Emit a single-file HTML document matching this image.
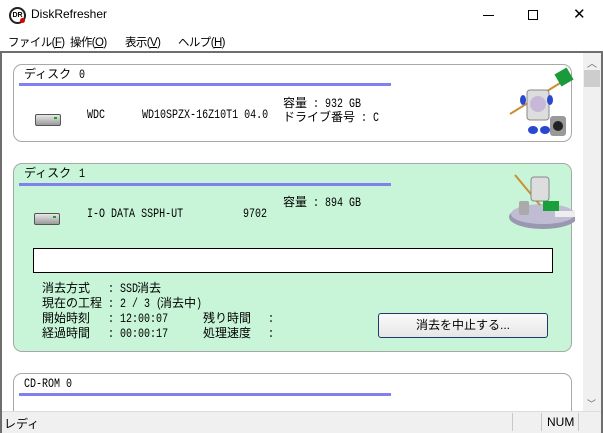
<!DOCTYPE html>
<html><head><meta charset="utf-8"><style>
*{margin:0;padding:0;box-sizing:border-box}
body{width:603px;height:433px;overflow:hidden;background:#fff;font-family:"Liberation Sans","Noto Sans CJK JP",sans-serif;position:relative}
.a{position:absolute;white-space:nowrap}
.m{font-family:"Liberation Mono","Noto Sans CJK JP",monospace;font-size:12px;line-height:14px;color:#000}
.e{font-family:"Liberation Mono",monospace;font-size:13px;line-height:14px;transform:scaleX(.77);transform-origin:left}
.j{font-family:"Liberation Sans","Noto Sans CJK JP",sans-serif;font-size:12px;color:#000}
.mn{font-size:11.5px;letter-spacing:-0.6px}
.card{position:absolute;left:13px;width:559px;border:1px solid #a8a8a8;border-radius:9px}
.line{position:absolute;left:19px;width:372px;height:3px;background:#8080f0}
.hdd{position:absolute;width:26px;height:12px;border:1px solid #555;border-radius:2px;background:linear-gradient(#e8e8e8,#9a9a9a)}
.hdd:after{content:"";position:absolute;right:3px;top:2px;width:3px;height:2px;background:#1a1}
</style></head><body>
<!-- title bar -->
<div class="a" style="left:9px;top:7px;width:17px;height:17px;border-radius:50%;border:2px solid #222;background:#fff;font-size:7px;font-weight:bold;text-align:center;line-height:13px">DR</div>
<div class="a" style="left:20px;top:18px;width:5px;height:5px;background:#d00;border-radius:50%"></div>
<div class="a j" style="left:31px;top:7px;font-size:12px">DiskRefresher</div>
<div class="a" style="left:483px;top:15px;width:11px;height:1px;background:#000"></div>
<div class="a" style="left:528px;top:10px;width:10px;height:10px;border:1px solid #000"></div>
<div class="a" style="left:573px;top:9px;font-size:15px;line-height:12px">✕</div>
<!-- menu -->
<div class="a j mn" style="left:8px;top:34px">ファイル(<u>F</u>)</div>
<div class="a j mn" style="left:70px;top:34px">操作(<u>O</u>)</div>
<div class="a j mn" style="left:125px;top:34px">表示(<u>V</u>)</div>
<div class="a j mn" style="left:178px;top:34px">ヘルプ(<u>H</u>)</div>
<!-- client frame -->
<div class="a" style="left:0;top:51px;width:603px;height:2px;background:#6e6e6e"></div>
<div class="a" style="left:0;top:51px;width:2px;height:382px;background:#6e6e6e"></div>
<div class="a" style="left:601px;top:51px;width:2px;height:382px;background:#6e6e6e"></div>
<!-- scrollbar -->
<div class="a" style="left:583px;top:53px;width:18px;height:358px;background:#f0f0f0"></div>
<div class="a" style="left:584px;top:70px;width:16px;height:17px;background:#cdcdcd"></div>
<div class="a" style="left:587px;top:55px;font-size:10px;color:#606060">︿</div>
<div class="a" style="left:587px;top:397px;font-size:9px;color:#606060">﹀</div>

<!-- card 0 -->
<div class="card" style="top:64px;height:78px;background:#fff"></div>
<div class="a m" style="left:24px;top:68px">ディスク</div>
<div class="a e" style="left:79px;top:68px">0</div>
<div class="line" style="top:83px"></div>
<div class="hdd" style="left:35px;top:114px"></div>
<div class="a e" style="left:87px;top:108px">WDC</div>
<div class="a e" style="left:142px;top:108px">WD10SPZX-16Z10T1 04.0</div>
<div class="a m" style="left:283px;top:97px">容量</div>
<div class="a e" style="left:313px;top:97px">:  932 GB</div>
<div class="a m" style="left:283px;top:111px">ドライブ番号</div>
<div class="a e" style="left:361px;top:111px">: C</div>
<!-- mascot 0 -->
<svg class="a" style="left:505px;top:64px" width="70" height="76">
<line x1="5" y1="50" x2="60" y2="16" stroke="#c89030" stroke-width="2"/>
<rect x="52" y="6" width="14" height="14" fill="#1a9a3a" transform="rotate(-30 59 13)"/>
<rect x="22" y="26" width="22" height="30" rx="3" fill="#ddd" stroke="#888"/>
<circle cx="33" cy="40" r="8" fill="#c8b8d8"/>
<ellipse cx="18" cy="36" rx="3" ry="5" fill="#2848d0"/>
<ellipse cx="45" cy="36" rx="3" ry="5" fill="#2848d0"/>
<ellipse cx="28" cy="66" rx="5" ry="4" fill="#2848d0"/>
<ellipse cx="40" cy="66" rx="5" ry="4" fill="#2848d0"/>
<rect x="45" y="52" width="16" height="20" rx="3" fill="#999"/>
<circle cx="53" cy="62" r="5" fill="#222"/>
</svg>

<!-- card 1 -->
<div class="card" style="top:163px;height:189px;background:#c8f5d8"></div>
<div class="a m" style="left:24px;top:167px">ディスク</div>
<div class="a e" style="left:79px;top:167px">1</div>
<div class="line" style="top:183px"></div>
<div class="hdd" style="left:34px;top:213px"></div>
<div class="a e" style="left:87px;top:207px">I-O DATA SSPH-UT</div>
<div class="a e" style="left:243px;top:207px">9702</div>
<div class="a m" style="left:283px;top:196px">容量</div>
<div class="a e" style="left:313px;top:196px">:  894 GB</div>
<svg class="a" style="left:505px;top:165px" width="70" height="72">
<ellipse cx="38" cy="52" rx="34" ry="12" fill="#9a98b0"/>
<ellipse cx="38" cy="49" rx="32" ry="10" fill="#c0bcd4"/>
<line x1="10" y1="10" x2="35" y2="40" stroke="#c89030" stroke-width="2"/>
<rect x="26" y="12" width="18" height="24" rx="3" fill="#ddd" stroke="#888"/>
<rect x="38" y="36" width="16" height="10" fill="#1aa03a"/>
<rect x="14" y="36" width="10" height="14" rx="2" fill="#aaa"/>
<rect x="50" y="46" width="20" height="6" fill="#eee"/>
</svg>
<div class="a" style="left:33px;top:248px;width:520px;height:25px;background:#fff;border:1px solid #000"></div>
<div class="a m" style="left:42px;top:282px">消去方式</div>
<div class="a m" style="left:42px;top:297px">現在の工程</div>
<div class="a m" style="left:42px;top:312px">開始時刻</div>
<div class="a m" style="left:42px;top:327px">経過時間</div>
<div class="a e" style="left:108px;top:282px">: SSD</div>
<div class="a m" style="left:137px;top:282px">消去</div>
<div class="a e" style="left:108px;top:297px">: 2 / 3 (</div>
<div class="a m" style="left:160px;top:297px">消去中</div>
<div class="a e" style="left:196px;top:297px">)</div>
<div class="a e" style="left:108px;top:312px">: 12:00:07</div>
<div class="a e" style="left:108px;top:327px">: 00:00:17</div>
<div class="a m" style="left:203px;top:312px">残り時間</div>
<div class="a m" style="left:203px;top:327px">処理速度</div>
<div class="a e" style="left:268px;top:312px">:</div>
<div class="a e" style="left:268px;top:327px">:</div>
<div class="a" style="left:378px;top:313px;width:170px;height:25px;border:1px solid #1d3a6a;border-radius:3px;background:linear-gradient(#fafafa,#e6e6e6);font-size:12px;text-align:center;line-height:23px;font-family:'Liberation Sans','Noto Sans CJK JP',sans-serif">消去を中止する...</div>

<!-- card 2 -->
<div class="card" style="top:373px;height:60px;background:#fff"></div>
<div class="a e" style="left:24px;top:377px">CD-ROM 0</div>
<div class="line" style="top:393px"></div>

<!-- status bar -->
<div class="a" style="left:2px;top:411px;width:599px;height:22px;background:#f0f0f0;border-top:1px solid #dcdcdc"></div>
<div class="a j" style="left:4px;top:415px">レディ</div>
<div class="a" style="left:512px;top:413px;width:1px;height:18px;background:#c8c8c8"></div>
<div class="a" style="left:541px;top:413px;width:1px;height:18px;background:#c8c8c8"></div>
<div class="a" style="left:578px;top:413px;width:1px;height:18px;background:#c8c8c8"></div>
<div class="a j" style="left:547px;top:415px">NUM</div>
</body></html>
